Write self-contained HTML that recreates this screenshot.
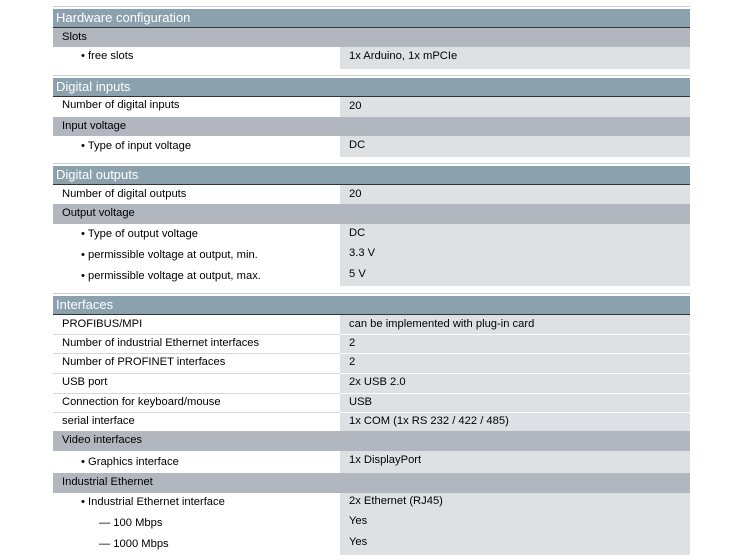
<!DOCTYPE html>
<html><head><style>
body{margin:0;width:743px;height:560px;background:#fff;position:relative;overflow:hidden;font-family:"Liberation Sans",Arial,sans-serif;font-size:11.2px;color:#000}
div{position:absolute;box-sizing:border-box}
.h{left:53px;width:637px;background:#8ba2ae;color:#fff;font-size:13px;padding-left:3px;border-bottom:1px solid #333;line-height:18px}
.s{left:53px;width:637px;background:#b1b6bf;padding-left:9px;line-height:19px}
.l{left:53px;width:287px;padding-left:9px;line-height:18px}
.b{padding-left:28px}
.d{padding-left:46px}
.v{left:340px;width:350px;background:#dde1e4;padding-left:9px;line-height:18px}
.line{left:53px;width:637px;height:1px;background:#c8ced3}
.sep{left:53px;width:287px;height:1px;background:#d4d8dc}
.vs{left:340px;width:350px;height:1px;background:#fff}
</style></head><body>
<div class="line" style="top:6px"></div>
<div class="h" style="top:9px;height:19px">Hardware configuration</div>
<div class="s" style="top:28px;height:19px">Slots</div>
<div class="l b" style="top:47px">• free slots</div>
<div class="v" style="top:47px;height:22px">1x Arduino, 1x mPCIe</div>

<div class="line" style="top:75px"></div>
<div class="h" style="top:78px;height:19px">Digital inputs</div>
<div class="l" style="top:96px">Number of digital inputs</div>
<div class="v" style="top:97px;height:20px">20</div>
<div class="s" style="top:117px;height:19px">Input voltage</div>
<div class="l b" style="top:137px">• Type of input voltage</div>
<div class="v" style="top:136px;height:21px">DC</div>

<div class="line" style="top:163px"></div>
<div class="h" style="top:166px;height:19px">Digital outputs</div>
<div class="l" style="top:185px">Number of digital outputs</div>
<div class="v" style="top:185px;height:19px">20</div>
<div class="s" style="top:204px;height:20px">Output voltage</div>
<div class="l b" style="top:225px">• Type of output voltage</div>
<div class="v" style="top:224px;height:62px"></div>
<div class="v" style="top:224px;background:none">DC</div>
<div class="l b" style="top:246px">• permissible voltage at output, min.</div>
<div class="v" style="top:244px;background:none">3.3 V</div>
<div class="l b" style="top:267px">• permissible voltage at output, max.</div>
<div class="v" style="top:265px;background:none">5 V</div>

<div class="line" style="top:293px"></div>
<div class="h" style="top:296px;height:19px">Interfaces</div>
<div class="v" style="top:315px;height:116px"></div>
<div class="l" style="top:315px">PROFIBUS/MPI</div><div class="v" style="top:315px;background:none">can be implemented with plug-in card</div>
<div class="sep" style="top:334px"></div><div class="vs" style="top:334px"></div>
<div class="l" style="top:334px">Number of industrial Ethernet interfaces</div><div class="v" style="top:334px;background:none">2</div>
<div class="sep" style="top:353px"></div><div class="vs" style="top:353px"></div>
<div class="l" style="top:353px">Number of PROFINET interfaces</div><div class="v" style="top:353px;background:none">2</div>
<div class="sep" style="top:373px"></div><div class="vs" style="top:373px"></div>
<div class="l" style="top:373px">USB port</div><div class="v" style="top:373px;background:none">2x USB 2.0</div>
<div class="sep" style="top:393px"></div><div class="vs" style="top:393px"></div>
<div class="l" style="top:393px">Connection for keyboard/mouse</div><div class="v" style="top:393px;background:none">USB</div>
<div class="sep" style="top:412px"></div><div class="vs" style="top:412px"></div>
<div class="l" style="top:412px">serial interface</div><div class="v" style="top:412px;background:none">1x COM (1x RS 232 / 422 / 485)</div>
<div class="s" style="top:431px;height:20px">Video interfaces</div>
<div class="l b" style="top:453px">• Graphics interface</div>
<div class="v" style="top:451px;height:22px">1x DisplayPort</div>
<div class="s" style="top:473px;height:20px">Industrial Ethernet</div>
<div class="v" style="top:493px;height:62px"></div>
<div class="l b" style="top:493px">• Industrial Ethernet interface</div><div class="v" style="top:492px;background:none">2x Ethernet (RJ45)</div>
<div class="l d" style="top:514px">— 100 Mbps</div><div class="v" style="top:512px;background:none">Yes</div>
<div class="l d" style="top:535px">— 1000 Mbps</div><div class="v" style="top:533px;background:none">Yes</div>
</body></html>
